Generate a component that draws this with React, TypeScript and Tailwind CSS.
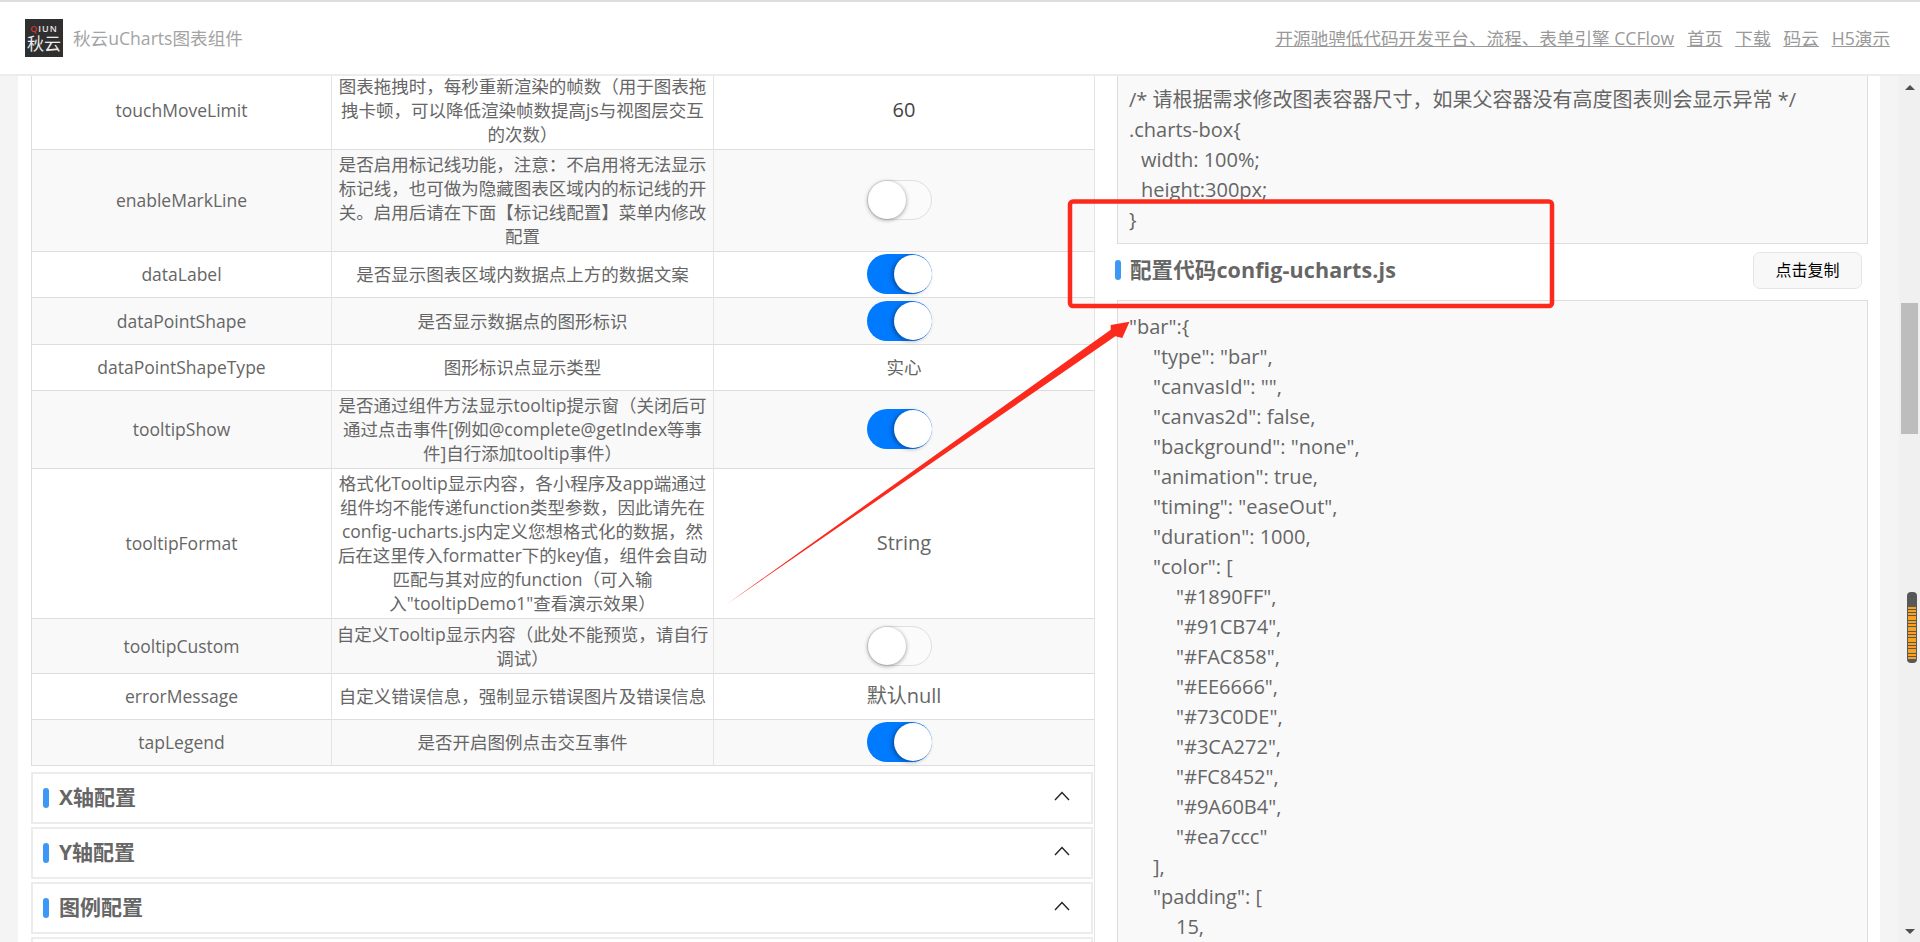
import React from "react";

const font = "font-['Open_Sans','Noto_Sans_CJK_SC',sans-serif]";

type Row = { name: string; desc: string[]; h: string; val?: string; valCls?: string; sw?: boolean };

const rows: Row[] = [
  { name: "touchMoveLimit", h: "h-[78px]", val: "60", valCls: "text-[20px] text-[#444444]", desc: ["图表拖拽时，每秒重新渲染的帧数（用于图表拖", "拽卡顿，可以降低渲染帧数提高js与视图层交互", "的次数）"] },
  { name: "enableMarkLine", h: "h-[102px]", sw: false, desc: ["是否启用标记线功能，注意：不启用将无法显示", "标记线，也可做为隐藏图表区域内的标记线的开", "关。启用后请在下面【标记线配置】菜单内修改", "配置"] },
  { name: "dataLabel", h: "h-[46px]", sw: true, desc: ["是否显示图表区域内数据点上方的数据文案"] },
  { name: "dataPointShape", h: "h-[47px]", sw: true, desc: ["是否显示数据点的图形标识"] },
  { name: "dataPointShapeType", h: "h-[46px]", val: "实心", valCls: "text-[17.5px]", desc: ["图形标识点显示类型"] },
  { name: "tooltipShow", h: "h-[78px]", sw: true, desc: ["是否通过组件方法显示tooltip提示窗（关闭后可", "通过点击事件[例如@complete@getIndex等事", "件]自行添加tooltip事件）"] },
  { name: "tooltipFormat", h: "h-[150px]", val: "String", valCls: "text-[20px]", desc: ["格式化Tooltip显示内容，各小程序及app端通过", "组件均不能传递function类型参数，因此请先在", "config-ucharts.js内定义您想格式化的数据，然", "后在这里传入formatter下的key值，组件会自动", "匹配与其对应的function（可入输", "入\"tooltipDemo1\"查看演示效果）"] },
  { name: "tooltipCustom", h: "h-[55px]", sw: false, desc: ["自定义Tooltip显示内容（此处不能预览，请自行", "调试）"] },
  { name: "errorMessage", h: "h-[46px]", val: "默认null", valCls: "text-[20px]", desc: ["自定义错误信息，强制显示错误图片及错误信息"] },
  { name: "tapLegend", h: "h-[46px]", sw: true, desc: ["是否开启图例点击交互事件"] },
];

const cssLines: [number, string][] = [
  [0, "/* 请根据需求修改图表容器尺寸，如果父容器没有高度图表则会显示异常 */"],
  [0, ".charts-box{"],
  [3, "width: 100%;"],
  [3, "height:300px;"],
  [0, "}"],
];

const configLines: [number, string][] = [
  [0, "\"bar\":{"],
  [1, "\"type\": \"bar\","],
  [1, "\"canvasId\": \"\","],
  [1, "\"canvas2d\": false,"],
  [1, "\"background\": \"none\","],
  [1, "\"animation\": true,"],
  [1, "\"timing\": \"easeOut\","],
  [1, "\"duration\": 1000,"],
  [1, "\"color\": ["],
  [2, "\"#1890FF\","],
  [2, "\"#91CB74\","],
  [2, "\"#FAC858\","],
  [2, "\"#EE6666\","],
  [2, "\"#73C0DE\","],
  [2, "\"#3CA272\","],
  [2, "\"#FC8452\","],
  [2, "\"#9A60B4\","],
  [2, "\"#ea7ccc\""],
  [1, "],"],
  [1, "\"padding\": ["],
  [2, "15,"],
];

const indent = ["", "pl-[24px]", "pl-[47px]", "pl-[12px]"];

function Switch({ on }: { on: boolean }) {
  return on ? (
    <div className="flex h-[40px] w-[65px] items-center justify-end rounded-full bg-[#007aff]">
      <div className="h-[38px] w-[38px] rounded-full bg-white shadow-[-2px_1px_4px_rgba(0,0,0,0.35)]" />
    </div>
  ) : (
    <div className="flex h-[40px] w-[65px] items-center justify-start rounded-full border border-[#dfdfdf] bg-[#fbfbfb]">
      <div className="h-[38px] w-[38px] rounded-full bg-white shadow-[0_1px_4px_rgba(0,0,0,0.4)]" />
    </div>
  );
}

function Accordion({ title }: { title?: string }) {
  return (
    <div className="mb-[3px] flex h-[52px] w-[1062px] shrink-0 items-center justify-between border-2 border-[#ececec] bg-white pr-[21px] pl-[10px]">
      {title && (
        <>
          <div className="flex items-center gap-[10px]">
            <div className="h-[20px] w-[6px] rounded-full bg-[#3d97f7]" />
            <span className="text-[21px] font-bold text-[#666666]">{title}</span>
          </div>
          <svg width="16" height="10" viewBox="0 0 16 10" fill="none" className="mb-[3px]">
            <path d="M1 9 L8 1.5 L15 9" stroke="#222" strokeWidth="1.4" />
          </svg>
        </>
      )}
    </div>
  );
}

function Code({ lines }: { lines: [number, string][] }) {
  return (
    <>
      {lines.map(([lvl, t], i) => (
        <div key={i} className={`h-[30px] whitespace-pre ${indent[lvl]}`}>
          {t}
        </div>
      ))}
    </>
  );
}

const stripes = [0, 3, 6, 9, 11, 14, 17, 20, 22, 25, 28, 31, 33, 36, 39, 42, 44, 47, 50];

export default function App() {
  return (
    <div className={`relative flex h-[942px] w-[1920px] flex-col overflow-hidden bg-white ${font}`}>
      <header className="flex h-[76px] shrink-0 items-center justify-between border-t-2 border-b-2 border-t-[#dddddd] border-b-[#ececec] bg-white pr-[30px] pl-[25px]">
        <div className="flex items-center gap-[10px]">
          <div className="flex h-[38px] w-[38px] flex-col items-center justify-center bg-[#2f2f2f] leading-none">
            <span className="text-[9px] leading-[10px] font-semibold tracking-[1px] text-[#e6e6e6]">
              <span className="text-[#d8322f]">Q</span>IUN
            </span>
            <span className="text-[17px] leading-[19px] font-normal text-[#ececec]">秋云</span>
          </div>
          <span className="text-[17.6px] text-[#a3a3a3]">秋云uCharts图表组件</span>
        </div>
        <nav className="flex gap-[13px] text-[17.6px] text-[#999999] underline">
          <a>开源驰骋低代码开发平台、流程、表单引擎 CCFlow</a>
          <a>首页</a>
          <a>下载</a>
          <a>码云</a>
          <a>H5演示</a>
        </nav>
      </header>

      <div className="flex min-h-0 flex-1">
        <main className="flex min-w-0 flex-1 bg-[#f4f4f4] pl-[18px]">
          <div className="flex w-[1862px] overflow-hidden bg-white pl-[13px]">
            <section className="flex w-[1063px] shrink-0 flex-col">
              <table className="mt-[-5px] w-[1063px] table-fixed border-collapse border-x border-b border-[#dddddd] text-center text-[17.5px] leading-[24px] text-[#666666]">
                <colgroup>
                  <col className="w-[300px]" />
                  <col className="w-[382px]" />
                  <col className="w-[381px]" />
                </colgroup>
                <tbody>
                  {rows.map((r, i) => (
                    <tr key={r.name} className={`${r.h} border-b border-[#dddddd] ${i % 2 ? "bg-[#f9f9f9]" : "bg-white"}`}>
                      <td className="border-r border-[#e4e4e4] px-[3px]">{r.name}</td>
                      <td className="border-r border-[#e4e4e4] px-0 whitespace-nowrap">
                        {r.desc.map((l, j) => (
                          <div key={j}>{l}</div>
                        ))}
                      </td>
                      <td className={`px-[3px] ${r.valCls ?? ""}`}>
                        {r.val ? (
                          r.val
                        ) : (
                          <div className="flex justify-center">
                            <div className="mr-[9px]">
                              <Switch on={!!r.sw} />
                            </div>
                          </div>
                        )}
                      </td>
                    </tr>
                  ))}
                </tbody>
              </table>
              <div className="mt-[6px] flex flex-col">
                <Accordion title="X轴配置" />
                <Accordion title="Y轴配置" />
                <Accordion title="图例配置" />
                <Accordion />
              </div>
            </section>

            <section className="flex min-w-0 flex-1 flex-col border-l border-[#e4e4e4] pr-[12px] pl-[22px]">
              <div className="h-[168px] shrink-0 border-x border-b border-[#dddddd] bg-[#f9f9f9] pt-[9px] pl-[11px] text-[20px] leading-[30px] text-[#666666]">
                <Code lines={cssLines} />
              </div>
              <div className="flex h-[56px] shrink-0 items-center justify-between pr-[6px] pb-[4px]">
                <div className="flex items-center gap-[9px]">
                  <div className="ml-[-2px] h-[20px] w-[6px] rounded-full bg-[#3d97f7]" />
                  <span className="text-[21.5px] font-bold tracking-[0.1px] text-[#666666]">配置代码config-ucharts.js</span>
                </div>
                <button className="h-[37px] w-[109px] rounded-[7px] border border-[#e5e5e5] bg-[#f8f8f8] text-[16px] text-black">
                  点击复制
                </button>
              </div>
              <div className="min-h-0 flex-1 overflow-hidden border-x border-t border-[#dddddd] bg-[#f9f9f9] pt-[11px] pl-[11px] text-[20px] leading-[30px] text-[#666666]">
                <Code lines={configLines} />
              </div>
            </section>
          </div>
          <div className="w-[19px] shrink-0" />
        </main>

        <aside className="flex w-[21px] shrink-0 flex-col items-center bg-[#f0f0f0] pt-[9px]">
          <div className="h-0 w-0 border-x-[5px] border-b-[5px] border-x-transparent border-b-[#505050]" />
          <div className="mt-[213px] h-[131px] w-[17px] bg-[#bdbdbd]" />
          <div className="mt-auto mb-[8px] h-0 w-0 border-x-[5px] border-t-[5px] border-x-transparent border-t-[#505050]" />
        </aside>
      </div>

      {/* scroll-position marker that floats over the scrollbar track */}
      <svg className="pointer-events-none absolute top-[592px] left-[1907px]" width="10" height="72" viewBox="0 0 10 72">
        <rect x="0" y="0" width="10" height="71" rx="4" fill="#585858" />
        {stripes.map((y) => (
          <rect key={y} x="1" y={15 + y} width="8" height="2" fill="#f7a11f" />
        ))}
      </svg>

      {/* hand-drawn red annotations */}
      <svg className="pointer-events-none absolute top-0 left-0" width="1920" height="942" viewBox="0 0 1920 942">
        <rect x="1070" y="201.5" width="482" height="104.5" rx="3" fill="none" stroke="#fb2a1d" strokeWidth="4.5" />
        <polygon points="727,604 1110.7,329.7 1110.7,325 1129.5,321.7 1122.3,338 1115.3,336.3" fill="#fb2a1d" />
      </svg>
    </div>
  );
}
